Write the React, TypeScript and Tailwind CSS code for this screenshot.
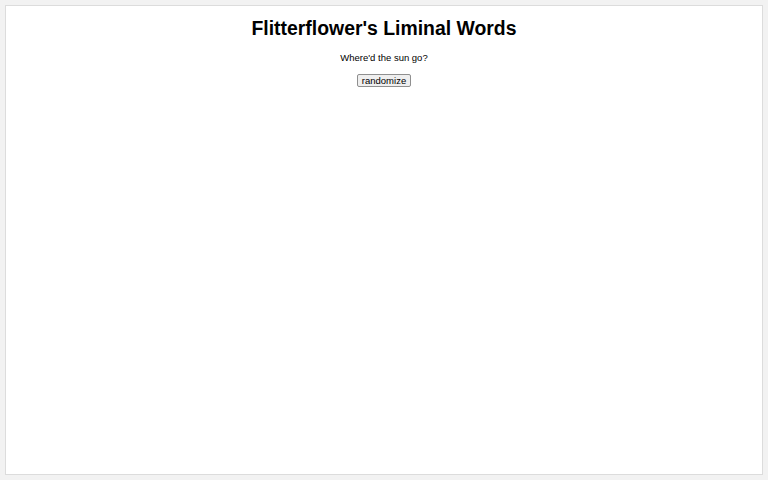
export default function App() {
  return (
    <div className="h-[480px] w-[768px] bg-[#f2f2f2] p-[5px] font-['Liberation_Sans',Arial,sans-serif]">
      <div className="flex h-[470px] flex-col items-center border border-[#dcdcdc] bg-white">
        <h1 className="mt-[10px] text-[19.4px] font-bold leading-[24px] text-black">Flitterflower's Liminal Words</h1>
        <p className="mt-[12px] text-[9.5px] leading-[12px] text-black">Where'd the sun go?</p>
        <button className="mt-[10px] h-[13px] rounded-[2px] border border-[#8f8f8f] bg-[#efefef] px-[4px] text-[9.5px] leading-[11px] text-black">
          randomize
        </button>
      </div>
    </div>
  )
}
